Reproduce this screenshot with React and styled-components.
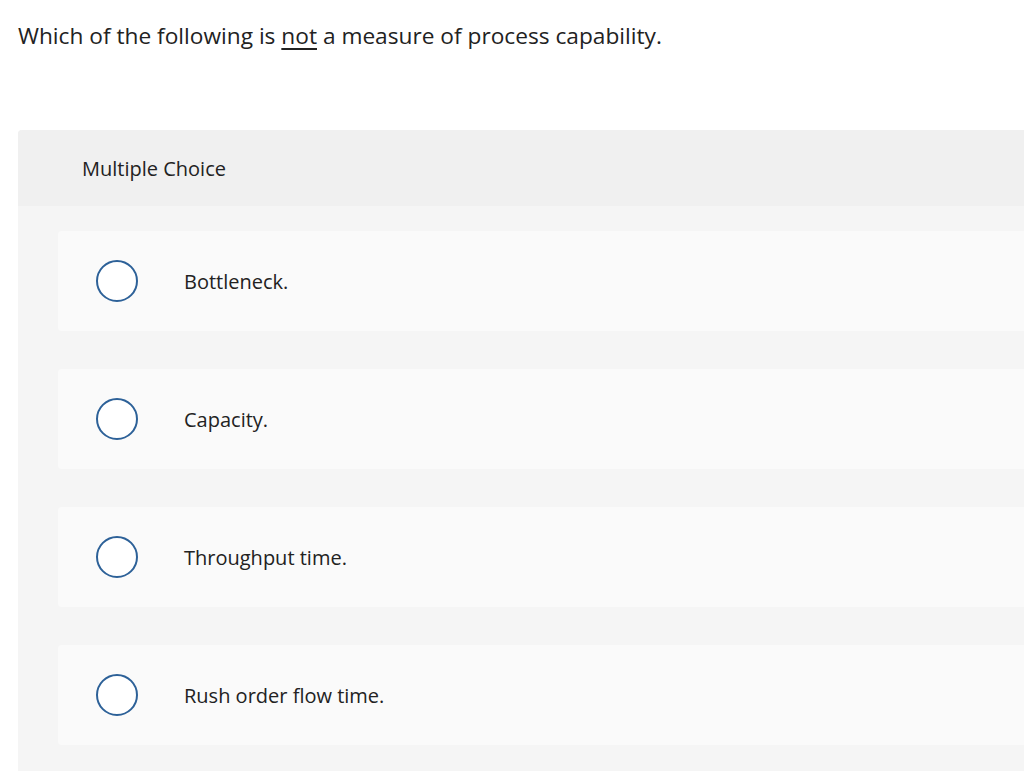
import React from 'react';
import styled, { createGlobalStyle } from 'styled-components';

const GlobalStyle = createGlobalStyle`
  html, body {
    margin: 0;
    padding: 0;
    background: #fff;
    overflow: hidden;
  }
  body {
    font-family: "Open Sans", Lato, "Liberation Sans", sans-serif;
    color: #222;
  }
`;

const Page = styled.div`
  width: 1024px;
  height: 771px;
  padding-left: 18px;
  box-sizing: border-box;
  overflow: hidden;
`;

const Question = styled.p`
  margin: 0;
  padding-top: 21px;
  height: 130px;
  box-sizing: border-box;
  font-size: 22.7px;
  line-height: 30px;
  color: #222;
  u {
    text-decoration: underline;
    text-underline-offset: 4px;
    text-decoration-thickness: 1.5px;
  }
`;

const Panel = styled.section`
  width: 1040px;
  background: #f5f5f5;
  border-radius: 4px 0 0 0;
  overflow: hidden;
`;

const PanelHeader = styled.div`
  height: 76px;
  display: flex;
  align-items: center;
  padding-left: 64px;
  background: #f0f0f0;
  font-size: 20px;
  color: #222;
`;

const Options = styled.div`
  display: flex;
  flex-direction: column;
  gap: 38px;
  padding: 25px 0 40px 40px;
`;

const OptionCard = styled.label`
  height: 100px;
  display: flex;
  align-items: center;
  background: #fafafa;
  border-radius: 4px 0 0 4px;
  padding-left: 38px;
  cursor: pointer;
`;

const Radio = styled.span`
  width: 42px;
  height: 42px;
  box-sizing: border-box;
  border-radius: 50%;
  border: 2px solid #2d6198;
  background: #fff;
  flex-shrink: 0;
`;

const OptionText = styled.span`
  margin-left: 46px;
  font-size: 20px;
  color: #222;
`;

const choices = ['Bottleneck.', 'Capacity.', 'Throughput time.', 'Rush order flow time.'];

export default function App() {
  return (
    <>
      <GlobalStyle />
      <Page>
        <Question>
          Which of the following is <u>not</u> a measure of process capability.
        </Question>
        <Panel>
          <PanelHeader>Multiple Choice</PanelHeader>
          <Options>
            {choices.map((c) => (
              <OptionCard key={c}>
                <Radio />
                <OptionText>{c}</OptionText>
              </OptionCard>
            ))}
          </Options>
        </Panel>
      </Page>
    </>
  );
}
